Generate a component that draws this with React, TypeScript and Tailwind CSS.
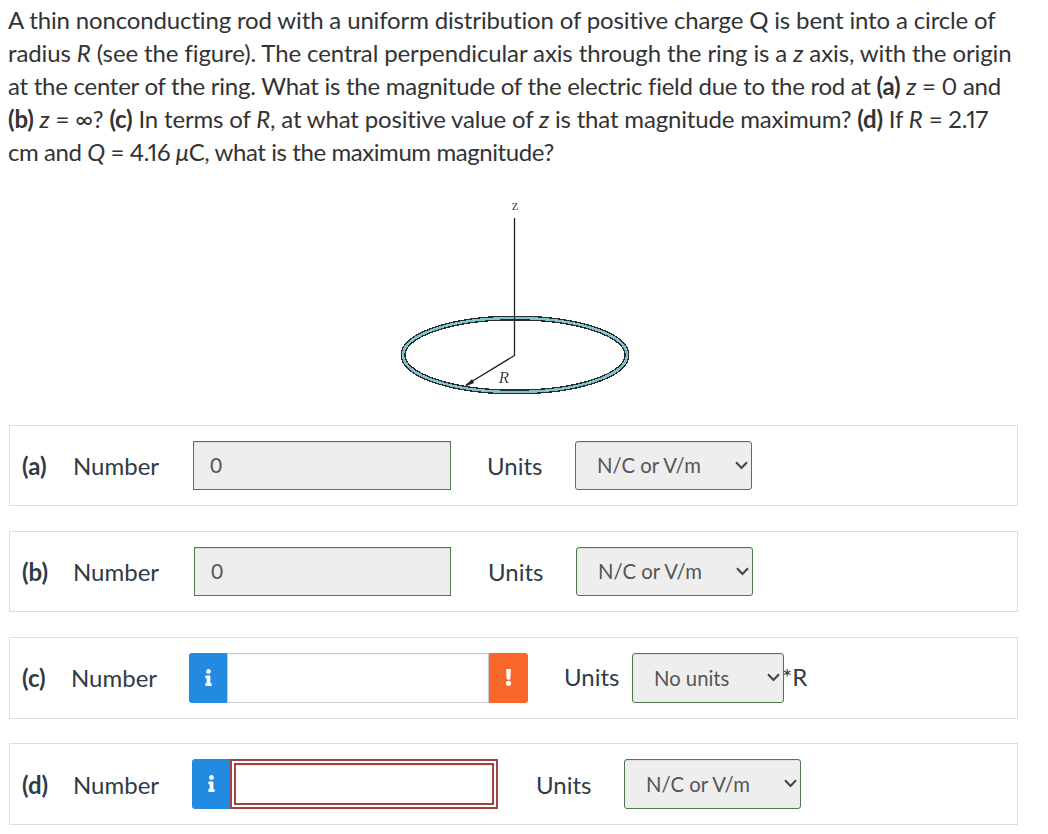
import React from 'react';
import { FaInfo, FaExclamation } from 'react-icons/fa';

const fieldBorder = 'border border-[#4d7a4d]';
const inset = 'shadow-[inset_0_1px_1px_rgba(0,0,0,0.075)]';

const UnitSelect = ({ value, className }: { value: string; className: string }) => (
  <div className={`relative shrink-0 ${className}`}>
    <select
      defaultValue={value}
      className={`appearance-none w-full h-full ${fieldBorder} ${inset} rounded-[3px] bg-[#eeeeee] pl-[21px] text-[#555555] text-[20.3px]`}
    >
      <option>{value}</option>
    </select>
    <svg width="13" height="9" viewBox="0 0 13 9" className="absolute right-[4px] top-[20px] pointer-events-none">
      <path d="M1 1.2L6.5 7L12 1.2" fill="none" stroke="#444444" strokeWidth="2" />
    </svg>
  </div>
);

const InfoButton = () => (
  <div className="w-[38px] h-[50px] shrink-0 rounded-l-[3px] bg-[#228ae0] flex items-center justify-center text-white pb-[2px]">
    <FaInfo size={17} />
  </div>
);

const Row = ({ className = '', children }: { className?: string; children: React.ReactNode }) => (
  <div className={`mx-[9px] w-[1009px] border border-[#dddddd] flex items-center pl-[11px] text-[24px] text-[#2f3b47] ${className}`}>
    {children}
  </div>
);

const Figure = () => (
  <svg width="270" height="220" viewBox="380 190 270 220" className="block ml-[380px] blur-[0.3px]">
    <g shapeRendering="crispEdges">
      <ellipse cx="515" cy="355" rx="112" ry="37" fill="none" stroke="#2b2b2b" strokeWidth="5" />
      <ellipse cx="515" cy="355" rx="112" ry="37" fill="none" stroke="#7fc4cf" strokeWidth="2.4" />
    </g>
    <path d="M514.5 218V355.5L466 385" fill="none" stroke="#222222" strokeWidth="1.3" />
    <path d="M464 387L472 379L474 383Z" fill="#222222" />
    <text x="515" y="210" fontFamily="Liberation Serif" fontSize="15" textAnchor="middle" fill="#555555">z</text>
    <text x="504" y="383" fontFamily="Liberation Serif" fontSize="17" fontStyle="italic" textAnchor="middle" fill="#444444">R</text>
  </svg>
);

export default function App() {
  return (
    <div className="w-[1048px] h-[834px] overflow-hidden bg-white font-['Lato','Liberation_Sans',sans-serif]">
      <div className="pt-[3px] pl-[8px] text-[24px] leading-[33px] text-[#333333] proportional-nums whitespace-nowrap">
        <p className="tracking-[-0.15px]">A thin nonconducting rod with a uniform distribution of positive charge Q is bent into a circle of</p>
        <p className="tracking-[-0.11px]">radius <i>R</i> (see the figure). The central perpendicular axis through the ring is a <i>z</i> axis, with the origin</p>
        <p className="tracking-[-0.26px]">at the center of the ring. What is the magnitude of the electric field due to the rod at <b>(a)</b> <i>z</i> = 0 and</p>
        <p className="tracking-[-0.17px]"><b>(b)</b> <i>z</i> = ∞? <b>(c)</b> In terms of <i>R</i>, at what positive value of <i>z</i> is that magnitude maximum? <b>(d)</b> If <i>R</i> = 2.17</p>
        <p className="tracking-[-0.42px]">cm and <i>Q</i> = 4.16 <i>μ</i>C, what is the maximum magnitude?</p>
      </div>

      <div className="mt-[22px]">
        <Figure />
      </div>

      <div className="mt-[15px]">
        <Row className="h-[81px]">
          <b className="w-[52px] pl-[1px]">(a)</b>
          <span className="w-[120px]">Number</span>
          <input readOnly value="0" className={`w-[258px] h-[49px] ${fieldBorder} ${inset} bg-[#eeeeee] pl-[16px] pb-[2px] text-[21px] text-[#555555]`} />
          <span className="ml-[36px] w-[88px]">Units</span>
          <UnitSelect value="N/C or V/m" className="w-[177px] h-[49px]" />
        </Row>
        <Row className="h-[81px] mt-[25px]">
          <b className="w-[52px] pl-[1px]">(b)</b>
          <span className="w-[121px]">Number</span>
          <input readOnly value="0" className={`w-[257px] h-[49px] ${fieldBorder} ${inset} bg-[#eeeeee] pl-[16px] pb-[2px] text-[21px] text-[#555555]`} />
          <span className="ml-[37px] w-[88px]">Units</span>
          <UnitSelect value="N/C or V/m" className="w-[177px] h-[49px]" />
        </Row>
        <Row className="h-[82px] mt-[25px]">
          <b className="w-[50px] pl-[1px]">(c)</b>
          <span className="w-[118px]">Number</span>
          <InfoButton />
          <input readOnly className={`w-[262px] h-[50px] border border-[#cccccc] ${inset} bg-white`} />
          <div className="w-[39px] h-[50px] shrink-0 rounded-r-[3px] bg-[#f9662a] flex items-center justify-center text-white pb-[2px]">
            <FaExclamation size={17} />
          </div>
          <span className="ml-[36px] w-[68px] pb-[2px]">Units</span>
          <UnitSelect value="No units" className="w-[152px] h-[50px]" />
          <span className="-ml-[2px] pb-[2px]">*R</span>
        </Row>
        <Row className="h-[82px] mt-[24px]">
          <b className="w-[52px] pl-[1px] pt-[2px]">(d)</b>
          <span className="w-[119px] pt-[2px]">Number</span>
          <InfoButton />
          <input readOnly className={`w-[268px] h-[50px] border-[6px] border-double border-[#a04545] ${inset} bg-white`} />
          <span className="ml-[38px] w-[88px] pt-[2px]">Units</span>
          <UnitSelect value="N/C or V/m" className="w-[177px] h-[50px]" />
        </Row>
      </div>
    </div>
  );
}
